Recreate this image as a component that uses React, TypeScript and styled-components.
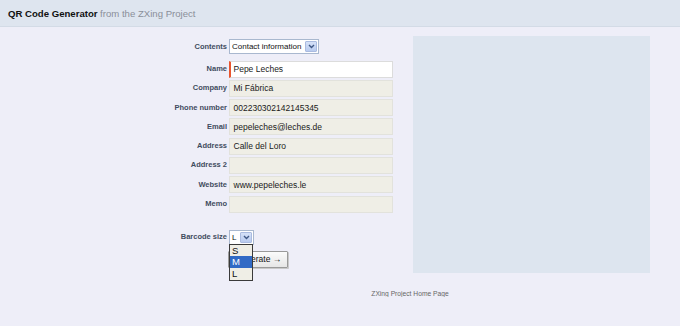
import * as React from 'react';
import styled, { createGlobalStyle } from 'styled-components';

const GlobalStyle = createGlobalStyle`
  html, body {
    margin: 0;
    padding: 0;
    background: #eeeef8;
    font-family: "Liberation Sans", Arial, sans-serif;
  }
`;

const Header = styled.div`
  height: 26px;
  background: #dee5ef;
  border-bottom: 1px solid #d3dbe6;
  display: flex;
  align-items: center;
  padding-left: 8px;
  font-size: 9.6px;
`;

const Title = styled.span`
  font-weight: bold;
  color: #111;
`;

const Subtitle = styled.span`
  color: #8a8f99;
  margin-left: 2.5px;
`;

const Main = styled.div`
  margin-left: 170px;
  width: 480px;
  padding-top: 9px;
`;

const Columns = styled.div`
  display: flex;
  align-items: flex-start;
  gap: 20px;
`;

const Form = styled.div`
  width: 223px;
  padding-top: 3px;
  display: flex;
  flex-direction: column;
`;

const Row = styled.div<{ $top?: number }>`
  display: flex;
  align-items: center;
  gap: 2px;
  margin-top: ${({ $top }) => $top ?? 0}px;
  position: relative;
`;

const Label = styled.div`
  width: 57px;
  flex: none;
  text-align: right;
  font-size: 7.5px;
  font-weight: bold;
  color: #3f4c5e;
  margin-top: -1px;
`;

const Field = styled.div<{ $focus?: boolean }>`
  box-sizing: border-box;
  width: 164px;
  height: 17px;
  display: flex;
  align-items: center;
  padding-left: ${({ $focus }) => ($focus ? 2.5 : 3.5)}px;
  background: ${({ $focus }) => ($focus ? '#ffffff' : '#efeee6')};
  border: 1px solid ${({ $focus }) => ($focus ? '#dcdcdc' : '#e2e2dc')};
  border-left: ${({ $focus }) => ($focus ? '2px solid #e9552e' : '1px solid #e2e2dc')};
  font-size: 8.5px;
  color: #1a1a1a;
`;

const Select = styled.div<{ $width: number }>`
  box-sizing: border-box;
  width: ${({ $width }) => $width}px;
  height: 15px;
  display: flex;
  align-items: center;
  background: #fff;
  border: 1px solid #a9b8cf;
  font-size: 8px;
  color: #111;
  padding-left: 2px;
`;

const SelectText = styled.span`
  flex: 1;
  white-space: nowrap;
  overflow: hidden;
`;

const ArrowBox = styled.span`
  box-sizing: border-box;
  flex: none;
  width: 12px;
  height: 11px;
  margin-right: 1px;
  display: flex;
  align-items: center;
  justify-content: center;
  background: linear-gradient(#d5e1f8, #b9cbef);
  border: 1px solid #aabbe0;
  border-radius: 1px;
`;

const Menu = styled.div`
  position: absolute;
  left: 59px;
  top: 14px;
  box-sizing: border-box;
  width: 24px;
  border: 1px solid #3a3a3a;
  background: #efeee6;
  z-index: 2;
  padding: 0 0 1px;
`;

const MenuItem = styled.div<{ $active?: boolean }>`
  height: 11.5px;
  line-height: 11.5px;
  padding-left: 2px;
  font-size: 9.5px;
  background: ${({ $active }) => ($active ? '#316ac5' : 'transparent')};
  color: ${({ $active }) => ($active ? '#fff' : '#111')};
`;

const Spacer = styled.div`
  width: 57px;
  flex: none;
`;

const Button = styled.div`
  box-sizing: border-box;
  height: 17px;
  padding: 0 6px 0 6px;
  display: flex;
  align-items: center;
  background: linear-gradient(#fbfbfb, #e6e6e6);
  border: 1px solid #9a9a9a;
  border-radius: 1px;
  box-shadow: 1px 1px 0 #c9c9c9;
  font-size: 8.5px;
  color: #111;
  margin-left: -1px;
`;

const Preview = styled.div`
  width: 237px;
  height: 237px;
  background: #dde5ef;
`;

const Footer = styled.div`
  margin-top: 17px;
  text-align: center;
  font-size: 6.7px;
  color: #666;
`;

const Chevron = () => (
  <svg width="7" height="5" viewBox="0 0 7 5">
    <path d="M1 1 L3.5 3.5 L6 1" fill="none" stroke="#3f5885" strokeWidth="1.4" />
  </svg>
);

const fields = [
  { label: 'Company', value: 'Mi Fábrica' },
  { label: 'Phone number', value: '002230302142145345' },
  { label: 'Email', value: 'pepeleches@leches.de' },
  { label: 'Address', value: 'Calle del Loro' },
  { label: 'Address 2', value: '' },
  { label: 'Website', value: 'www.pepeleches.le' },
  { label: 'Memo', value: '' },
];

export default function App() {
  return (
    <>
      <GlobalStyle />
      <Header>
        <Title>QR Code Generator</Title>
        <Subtitle>from the ZXing Project</Subtitle>
      </Header>
      <Main>
        <Columns>
          <Form>
            <Row>
              <Label>Contents</Label>
              <Select $width={90}>
                <SelectText>Contact information</SelectText>
                <ArrowBox>
                  <Chevron />
                </ArrowBox>
              </Select>
            </Row>
            <Row $top={6.5}>
              <Label>Name</Label>
              <Field $focus>Pepe Leches</Field>
            </Row>
            {fields.map((f) => (
              <Row key={f.label} $top={2.3}>
                <Label>{f.label}</Label>
                <Field>{f.value}</Field>
              </Row>
            ))}
            <Row $top={17}>
              <Label>Barcode size</Label>
              <Select $width={25}>
                <SelectText>L</SelectText>
                <ArrowBox>
                  <Chevron />
                </ArrowBox>
              </Select>
              <Menu>
                <MenuItem>S</MenuItem>
                <MenuItem $active>M</MenuItem>
                <MenuItem>L</MenuItem>
              </Menu>
            </Row>
            <Row $top={6}>
              <Spacer />
              <Button>Generate →</Button>
            </Row>
          </Form>
          <Preview />
        </Columns>
        <Footer>ZXing Project Home Page</Footer>
      </Main>
    </>
  );
}
